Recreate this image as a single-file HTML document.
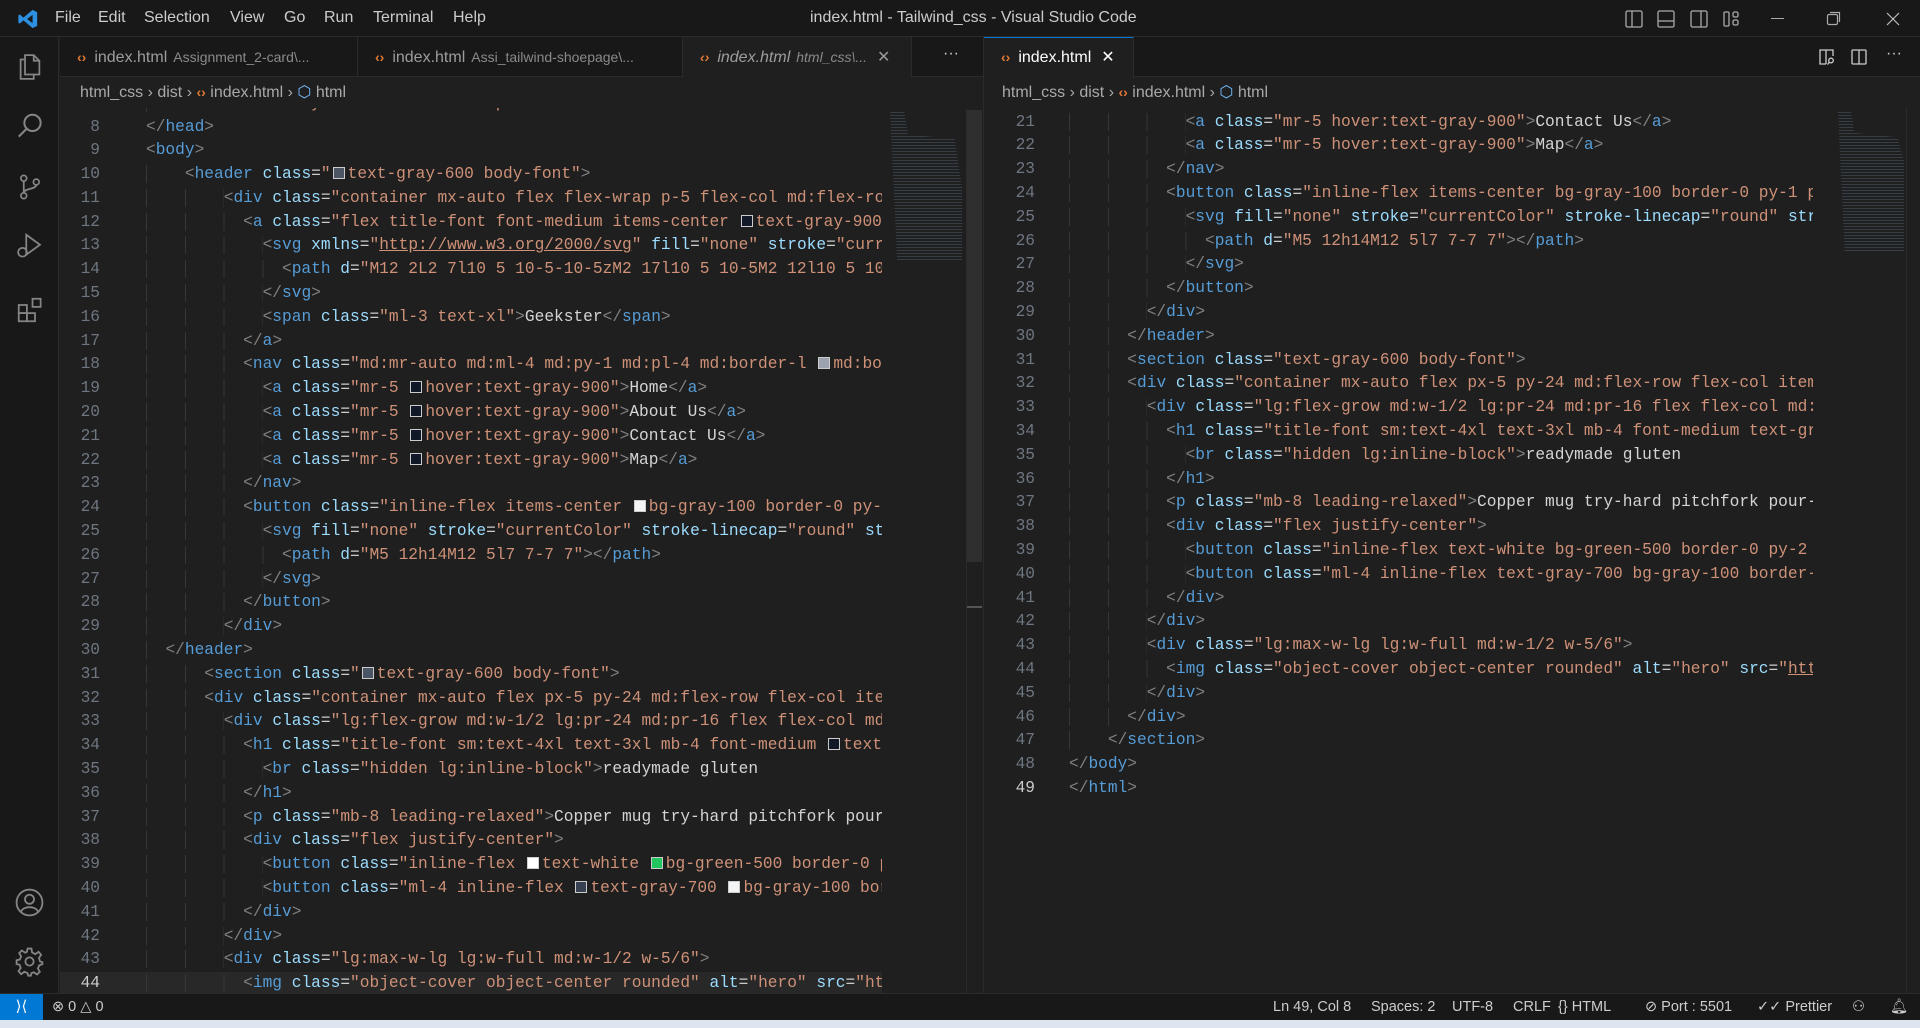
<!DOCTYPE html>
<html><head><meta charset="utf-8"><style>
*{margin:0;padding:0;box-sizing:border-box}
body{width:1920px;height:1028px;overflow:hidden;background:#1f1f1f;font-family:"Liberation Sans",sans-serif;color:#ccc;position:relative}
.abs{position:absolute}
#title{left:0;top:0;width:1920px;height:37px;background:#181818;border-bottom:1px solid #2b2b2b}
.menu{top:9px;font-size:16px;color:#cccccc}
#act{left:0;top:37px;width:59px;height:956px;background:#181818;border-right:1px solid #2b2b2b}
.tabbar{top:37px;height:40px;background:#181818;border-bottom:1px solid #2b2b2b}
.tab{top:0;height:40px;border-right:1px solid #2b2b2b;font-size:16px;line-height:40px;color:#9d9d9d;white-space:nowrap;overflow:hidden}
.tab .d{font-size:14px;color:#8a8a8a;margin-left:6px}
.ic{color:#e37933;font-weight:bold;margin:0 8px 0 17px;font-size:14px}
.bc{top:77px;height:31px;font-size:16px;line-height:31px;color:#a9a9a9;white-space:pre}
.ed{overflow:hidden;font-family:"Liberation Mono",monospace;font-size:16.2px}
.ln{height:23.8px;line-height:23.8px;white-space:pre;position:relative}
.num{position:absolute;text-align:right;color:#6e7681;width:40px}
.i{background:repeating-linear-gradient(to right,#363636 0 1px,transparent 1px 4ch)}
.t{color:#569cd6}.a{color:#9cdcfe}.s{color:#ce9178}.p{color:#808080}.x{color:#d4d4d4}
.b{display:inline-block;width:12px;height:12px;border:1px solid #ccc;margin:0 3px 0 2px;vertical-align:-1px}
#status{left:0;top:993px;width:1920px;height:27px;background:#181818;border-top:1px solid #2b2b2b;font-size:14.5px;line-height:26px;color:#cccccc}
.st{top:0}
.mm{background:repeating-linear-gradient(to bottom,rgba(110,140,170,.28) 0 1px,transparent 1px 3px)}
</style></head><body>

<div id="title" class="abs">
 <svg class="abs" style="left:17px;top:8px" width="22" height="22" viewBox="0 0 24 24"><path d="M17 2 L22 4.5 V19.5 L17 22 L7 13.5 L3 17 L1.5 16 V8 L3 7 L7 10.5 Z M17 7.5 L11 12 L17 16.5 Z" fill="#2d8fe0"/></svg>
 <span class="abs menu" style="left:55px">File</span>
 <span class="abs menu" style="left:98px">Edit</span>
 <span class="abs menu" style="left:144px">Selection</span>
 <span class="abs menu" style="left:230px">View</span>
 <span class="abs menu" style="left:284px">Go</span>
 <span class="abs menu" style="left:324px">Run</span>
 <span class="abs menu" style="left:373px">Terminal</span>
 <span class="abs menu" style="left:453px">Help</span>
 <span class="abs menu" style="left:810px;color:#cccccc">index.html - Tailwind_css - Visual Studio Code</span>
 <svg class="abs" style="left:1624px;top:9px" width="20" height="20" viewBox="0 0 20 20" fill="none" stroke="#aaa" stroke-width="1.3"><rect x="2" y="2" width="16" height="16" rx="1.5"/><line x1="8" y1="2" x2="8" y2="18"/></svg>
 <svg class="abs" style="left:1656px;top:9px" width="20" height="20" viewBox="0 0 20 20" fill="none" stroke="#aaa" stroke-width="1.3"><rect x="2" y="2" width="16" height="16" rx="1.5"/><line x1="2" y1="12" x2="18" y2="12"/></svg>
 <svg class="abs" style="left:1689px;top:9px" width="20" height="20" viewBox="0 0 20 20" fill="none" stroke="#aaa" stroke-width="1.3"><rect x="2" y="2" width="16" height="16" rx="1.5"/><line x1="12" y1="2" x2="12" y2="18"/></svg>
 <svg class="abs" style="left:1722px;top:9px" width="20" height="20" viewBox="0 0 20 20" fill="none" stroke="#aaa" stroke-width="1.3"><rect x="2" y="3" width="5" height="14" rx="1"/><rect x="11" y="3" width="5" height="5" rx="1.5"/><rect x="11" y="11" width="5" height="5" rx="1.5"/></svg>
 <div class="abs" style="left:1771px;top:18px;width:13px;height:1px;background:#aaa"></div>
 <svg class="abs" style="left:1826px;top:11px" width="15" height="15" viewBox="0 0 15 15" fill="none" stroke="#aaa" stroke-width="1.2"><rect x="1.5" y="3.5" width="10" height="10" rx="1.5"/><path d="M4 1.5 H13.5 V11"/></svg>
 <svg class="abs" style="left:1886px;top:12px" width="14" height="14" viewBox="0 0 14 14" stroke="#bbb" stroke-width="1.2"><line x1="1" y1="1" x2="13" y2="13"/><line x1="13" y1="1" x2="1" y2="13"/></svg>
</div>

<div id="act" class="abs">
 <svg class="abs" style="left:15px;top:15px" width="30" height="30" viewBox="0 0 24 24" fill="none" stroke="#858585" stroke-width="1.4"><path d="M8 6 H4.5 V21.5 H15 V18"/><path d="M8 2.5 H15 L19.5 7 V18 H8 Z"/><path d="M15 2.5 V7 H19.5"/></svg>
 <svg class="abs" style="left:15px;top:74px" width="30" height="30" viewBox="0 0 24 24" fill="none" stroke="#858585" stroke-width="1.6"><circle cx="14" cy="9.5" r="6.5"/><line x1="9.5" y1="14" x2="3" y2="20.5"/></svg>
 <svg class="abs" style="left:15px;top:135px" width="30" height="30" viewBox="0 0 24 24" fill="none" stroke="#858585" stroke-width="1.4"><circle cx="7" cy="5" r="2.3"/><circle cx="7" cy="19" r="2.3"/><circle cx="17" cy="8" r="2.3"/><path d="M7 7.3 V16.7 M17 10.3 C17 14 7 13 7 16.7"/></svg>
 <svg class="abs" style="left:15px;top:194px" width="30" height="30" viewBox="0 0 24 24" fill="none" stroke="#858585" stroke-width="1.4"><path d="M9 3 L20 11 L9 19 Z"/><circle cx="6" cy="17" r="3.5"/></svg>
 <svg class="abs" style="left:15px;top:258px" width="30" height="30" viewBox="0 0 24 24" fill="none" stroke="#858585" stroke-width="1.4"><rect x="3" y="8" width="6.5" height="6.5"/><rect x="3" y="14.5" width="6.5" height="6.5"/><rect x="9.5" y="14.5" width="6.5" height="6.5"/><rect x="14" y="3" width="6.5" height="6.5"/></svg>
 <svg class="abs" style="left:14px;top:850px" width="31" height="31" viewBox="0 0 24 24" fill="none" stroke="#858585" stroke-width="1.4"><circle cx="12" cy="12" r="10"/><circle cx="12" cy="9.5" r="3.5"/><path d="M5.5 19 C7 14.5 17 14.5 18.5 19"/></svg>
 <svg class="abs" style="left:14px;top:909px" width="31" height="31" viewBox="0 0 24 24" fill="none" stroke="#858585" stroke-width="1.4"><circle cx="12" cy="12" r="3.2"/><path d="M10.5 2 H13.5 L14 5 L16.5 6.3 L19 4.5 L21 6.8 L19.3 9.3 L20.2 12 L22 12.5 V14 L19.5 15 L18.5 17.5 L20 20 L17.8 22 L15.3 20.3 L13.5 21 L13 23 H11 L10.5 21 L8 20 L5.5 21.8 L3.5 19.5 L5.2 17 L4.3 14.5 L2 14 V11 L4.5 10.5 L5.5 8 L4 5.5 L6 3.5 L8.7 5.2 L10 4.5 Z"/></svg>
</div>

<!-- left tab bar -->
<div class="abs tabbar" style="left:60px;width:923px">
 <div class="abs tab" style="left:0;width:298px"><span class="ic">&lsaquo;&rsaquo;</span>index.html<span class="d">Assignment_2-card\...</span></div>
 <div class="abs tab" style="left:298px;width:325px"><span class="ic">&lsaquo;&rsaquo;</span>index.html<span class="d">Assi_tailwind-shoepage\...</span></div>
 <div class="abs tab" style="left:623px;width:229px;background:#1f1f1f;font-style:italic;height:41px"><span class="ic">&lsaquo;&rsaquo;</span>index.html<span class="d" style="font-style:italic">html_css\...</span><span style="font-style:normal;margin-left:10px;color:#999">✕</span></div>
 <span class="abs" style="left:883px;top:8px;color:#ccc;font-size:16px">···</span>
</div>
<div class="abs tabbar" style="left:983px;width:937px;border-left:1px solid #2b2b2b">
 <div class="abs tab" style="left:0;width:150px;background:#1f1f1f;color:#fff;border-top:1px solid #0078d4;height:41px;line-height:38px"><span class="ic">&lsaquo;&rsaquo;</span>index.html<span style="margin-left:10px">✕</span></div>
 <svg class="abs" style="left:834px;top:11px" width="18" height="18" viewBox="0 0 18 18" fill="none" stroke="#ccc" stroke-width="1.3"><path d="M8 16 H2 V2 H15 V8"/><line x1="8" y1="2" x2="8" y2="16"/><circle cx="13" cy="12.5" r="2.3"/><line x1="11.3" y1="14.3" x2="9.5" y2="16.5"/></svg>
 <svg class="abs" style="left:866px;top:11px" width="18" height="18" viewBox="0 0 18 18" fill="none" stroke="#ccc" stroke-width="1.3"><rect x="2" y="2" width="14" height="14" rx="1"/><line x1="9" y1="2" x2="9" y2="16"/></svg>
 <span class="abs" style="left:902px;top:8px;color:#ccc;font-size:16px">···</span>
</div>

<!-- breadcrumbs -->
<div class="abs bc" style="left:80px">html_css <span>›</span> dist <span>›</span> <span style="color:#e37933;font-weight:bold;font-size:14px">&lsaquo;&rsaquo;</span> index.html <span>›</span> <span style="color:#75beff">⬡</span> html</div>
<div class="abs bc" style="left:1002px">html_css <span>›</span> dist <span>›</span> <span style="color:#e37933;font-weight:bold;font-size:14px">&lsaquo;&rsaquo;</span> index.html <span>›</span> <span style="color:#75beff">⬡</span> html</div>

<!-- left editor -->
<div class="abs" style="left:983px;top:77px;width:1px;height:916px;background:#2b2b2b"></div>
<div class="abs ed" style="left:60px;top:108px;width:822px;height:885px">
 <div class="abs" style="left:0;top:-16.3px;width:822px">
  <div class="ln"><span class="num" style="left:0">7</span><span style="position:absolute;left:86px"><span class="i">    </span><span class="p">&lt;</span><span class="t">link</span> <span class="a">rel</span>=<span class="s">"stylesheet"</span> <span class="a">href</span>=<span class="s">"output.css"</span><span class="p">&gt;</span></span></div>
  <div class="ln"><span class="num" style="left:0">8</span><span style="position:absolute;left:86px"><span class="p">&lt;/</span><span class="t">head</span><span class="p">&gt;</span></span></div>
  <div class="ln"><span class="num" style="left:0">9</span><span style="position:absolute;left:86px"><span class="p">&lt;</span><span class="t">body</span><span class="p">&gt;</span></span></div>
  <div class="ln"><span class="num" style="left:0">10</span><span style="position:absolute;left:86px"><span class="i">    </span><span class="p">&lt;</span><span class="t">header</span> <span class="a">class</span>=<span class="s">"<span class="b" style="background:#4b5563"></span>text-gray-600 body-font"</span><span class="p">&gt;</span></span></div>
  <div class="ln"><span class="num" style="left:0">11</span><span style="position:absolute;left:86px"><span class="i">        </span><span class="p">&lt;</span><span class="t">div</span> <span class="a">class</span>=<span class="s">"container mx-auto flex flex-wrap p-5 flex-col md:flex-row items-center"</span><span class="p">&gt;</span></span></div>
  <div class="ln"><span class="num" style="left:0">12</span><span style="position:absolute;left:86px"><span class="i">          </span><span class="p">&lt;</span><span class="t">a</span> <span class="a">class</span>=<span class="s">"flex title-font font-medium items-center <span class="b" style="background:#111827"></span>text-gray-900 mb-4"</span></span></div>
  <div class="ln"><span class="num" style="left:0">13</span><span style="position:absolute;left:86px"><span class="i">            </span><span class="p">&lt;</span><span class="t">svg</span> <span class="a">xmlns</span>=<span class="s">"<u>http://www.w3.org/2000/svg</u>"</span> <span class="a">fill</span>=<span class="s">"none"</span> <span class="a">stroke</span>=<span class="s">"currentColor"</span></span></div>
  <div class="ln"><span class="num" style="left:0">14</span><span style="position:absolute;left:86px"><span class="i">              </span><span class="p">&lt;</span><span class="t">path</span> <span class="a">d</span>=<span class="s">"M12 2L2 7l10 5 10-5-10-5zM2 17l10 5 10-5M2 12l10 5 10-5"</span></span></div>
  <div class="ln"><span class="num" style="left:0">15</span><span style="position:absolute;left:86px"><span class="i">            </span><span class="p">&lt;/</span><span class="t">svg</span><span class="p">&gt;</span></span></div>
  <div class="ln"><span class="num" style="left:0">16</span><span style="position:absolute;left:86px"><span class="i">            </span><span class="p">&lt;</span><span class="t">span</span> <span class="a">class</span>=<span class="s">"ml-3 text-xl"</span><span class="p">&gt;</span><span class="x">Geekster</span><span class="p">&lt;/</span><span class="t">span</span><span class="p">&gt;</span></span></div>
  <div class="ln"><span class="num" style="left:0">17</span><span style="position:absolute;left:86px"><span class="i">          </span><span class="p">&lt;/</span><span class="t">a</span><span class="p">&gt;</span></span></div>
  <div class="ln"><span class="num" style="left:0">18</span><span style="position:absolute;left:86px"><span class="i">          </span><span class="p">&lt;</span><span class="t">nav</span> <span class="a">class</span>=<span class="s">"md:mr-auto md:ml-4 md:py-1 md:pl-4 md:border-l <span class="b" style="background:#9ca3af"></span>md:border-gray-400"</span></span></div>
  <div class="ln"><span class="num" style="left:0">19</span><span style="position:absolute;left:86px"><span class="i">            </span><span class="p">&lt;</span><span class="t">a</span> <span class="a">class</span>=<span class="s">"mr-5 <span class="b" style="background:#111827"></span>hover:text-gray-900"</span><span class="p">&gt;</span><span class="x">Home</span><span class="p">&lt;/</span><span class="t">a</span><span class="p">&gt;</span></span></div>
  <div class="ln"><span class="num" style="left:0">20</span><span style="position:absolute;left:86px"><span class="i">            </span><span class="p">&lt;</span><span class="t">a</span> <span class="a">class</span>=<span class="s">"mr-5 <span class="b" style="background:#111827"></span>hover:text-gray-900"</span><span class="p">&gt;</span><span class="x">About Us</span><span class="p">&lt;/</span><span class="t">a</span><span class="p">&gt;</span></span></div>
  <div class="ln"><span class="num" style="left:0">21</span><span style="position:absolute;left:86px"><span class="i">            </span><span class="p">&lt;</span><span class="t">a</span> <span class="a">class</span>=<span class="s">"mr-5 <span class="b" style="background:#111827"></span>hover:text-gray-900"</span><span class="p">&gt;</span><span class="x">Contact Us</span><span class="p">&lt;/</span><span class="t">a</span><span class="p">&gt;</span></span></div>
  <div class="ln"><span class="num" style="left:0">22</span><span style="position:absolute;left:86px"><span class="i">            </span><span class="p">&lt;</span><span class="t">a</span> <span class="a">class</span>=<span class="s">"mr-5 <span class="b" style="background:#111827"></span>hover:text-gray-900"</span><span class="p">&gt;</span><span class="x">Map</span><span class="p">&lt;/</span><span class="t">a</span><span class="p">&gt;</span></span></div>
  <div class="ln"><span class="num" style="left:0">23</span><span style="position:absolute;left:86px"><span class="i">          </span><span class="p">&lt;/</span><span class="t">nav</span><span class="p">&gt;</span></span></div>
  <div class="ln"><span class="num" style="left:0">24</span><span style="position:absolute;left:86px"><span class="i">          </span><span class="p">&lt;</span><span class="t">button</span> <span class="a">class</span>=<span class="s">"inline-flex items-center <span class="b" style="background:#f3f4f6"></span>bg-gray-100 border-0 py-1 px-3"</span></span></div>
  <div class="ln"><span class="num" style="left:0">25</span><span style="position:absolute;left:86px"><span class="i">            </span><span class="p">&lt;</span><span class="t">svg</span> <span class="a">fill</span>=<span class="s">"none"</span> <span class="a">stroke</span>=<span class="s">"currentColor"</span> <span class="a">stroke-linecap</span>=<span class="s">"round"</span> <span class="a">stroke-linejoin</span></span></div>
  <div class="ln"><span class="num" style="left:0">26</span><span style="position:absolute;left:86px"><span class="i">              </span><span class="p">&lt;</span><span class="t">path</span> <span class="a">d</span>=<span class="s">"M5 12h14M12 5l7 7-7 7"</span><span class="p">&gt;&lt;/</span><span class="t">path</span><span class="p">&gt;</span></span></div>
  <div class="ln"><span class="num" style="left:0">27</span><span style="position:absolute;left:86px"><span class="i">            </span><span class="p">&lt;/</span><span class="t">svg</span><span class="p">&gt;</span></span></div>
  <div class="ln"><span class="num" style="left:0">28</span><span style="position:absolute;left:86px"><span class="i">          </span><span class="p">&lt;/</span><span class="t">button</span><span class="p">&gt;</span></span></div>
  <div class="ln"><span class="num" style="left:0">29</span><span style="position:absolute;left:86px"><span class="i">        </span><span class="p">&lt;/</span><span class="t">div</span><span class="p">&gt;</span></span></div>
  <div class="ln"><span class="num" style="left:0">30</span><span style="position:absolute;left:86px"><span class="i">  </span><span class="p">&lt;/</span><span class="t">header</span><span class="p">&gt;</span></span></div>
  <div class="ln"><span class="num" style="left:0">31</span><span style="position:absolute;left:86px"><span class="i">      </span><span class="p">&lt;</span><span class="t">section</span> <span class="a">class</span>=<span class="s">"<span class="b" style="background:#4b5563"></span>text-gray-600 body-font"</span><span class="p">&gt;</span></span></div>
  <div class="ln"><span class="num" style="left:0">32</span><span style="position:absolute;left:86px"><span class="i">      </span><span class="p">&lt;</span><span class="t">div</span> <span class="a">class</span>=<span class="s">"container mx-auto flex px-5 py-24 md:flex-row flex-col items-center"</span></span></div>
  <div class="ln"><span class="num" style="left:0">33</span><span style="position:absolute;left:86px"><span class="i">        </span><span class="p">&lt;</span><span class="t">div</span> <span class="a">class</span>=<span class="s">"lg:flex-grow md:w-1/2 lg:pr-24 md:pr-16 flex flex-col md:items-start"</span></span></div>
  <div class="ln"><span class="num" style="left:0">34</span><span style="position:absolute;left:86px"><span class="i">          </span><span class="p">&lt;</span><span class="t">h1</span> <span class="a">class</span>=<span class="s">"title-font sm:text-4xl text-3xl mb-4 font-medium <span class="b" style="background:#111827"></span>text-gray-900"</span></span></div>
  <div class="ln"><span class="num" style="left:0">35</span><span style="position:absolute;left:86px"><span class="i">            </span><span class="p">&lt;</span><span class="t">br</span> <span class="a">class</span>=<span class="s">"hidden lg:inline-block"</span><span class="p">&gt;</span><span class="x">readymade gluten</span></span></div>
  <div class="ln"><span class="num" style="left:0">36</span><span style="position:absolute;left:86px"><span class="i">          </span><span class="p">&lt;/</span><span class="t">h1</span><span class="p">&gt;</span></span></div>
  <div class="ln"><span class="num" style="left:0">37</span><span style="position:absolute;left:86px"><span class="i">          </span><span class="p">&lt;</span><span class="t">p</span> <span class="a">class</span>=<span class="s">"mb-8 leading-relaxed"</span><span class="p">&gt;</span><span class="x">Copper mug try-hard pitchfork pour-over freegan</span></span></div>
  <div class="ln"><span class="num" style="left:0">38</span><span style="position:absolute;left:86px"><span class="i">          </span><span class="p">&lt;</span><span class="t">div</span> <span class="a">class</span>=<span class="s">"flex justify-center"</span><span class="p">&gt;</span></span></div>
  <div class="ln"><span class="num" style="left:0">39</span><span style="position:absolute;left:86px"><span class="i">            </span><span class="p">&lt;</span><span class="t">button</span> <span class="a">class</span>=<span class="s">"inline-flex <span class="b" style="background:#ffffff"></span>text-white <span class="b" style="background:#22c55e"></span>bg-green-500 border-0 py-2 px-6"</span></span></div>
  <div class="ln"><span class="num" style="left:0">40</span><span style="position:absolute;left:86px"><span class="i">            </span><span class="p">&lt;</span><span class="t">button</span> <span class="a">class</span>=<span class="s">"ml-4 inline-flex <span class="b" style="background:#374151"></span>text-gray-700 <span class="b" style="background:#f3f4f6"></span>bg-gray-100 border-0"</span></span></div>
  <div class="ln"><span class="num" style="left:0">41</span><span style="position:absolute;left:86px"><span class="i">          </span><span class="p">&lt;/</span><span class="t">div</span><span class="p">&gt;</span></span></div>
  <div class="ln"><span class="num" style="left:0">42</span><span style="position:absolute;left:86px"><span class="i">        </span><span class="p">&lt;/</span><span class="t">div</span><span class="p">&gt;</span></span></div>
  <div class="ln"><span class="num" style="left:0">43</span><span style="position:absolute;left:86px"><span class="i">        </span><span class="p">&lt;</span><span class="t">div</span> <span class="a">class</span>=<span class="s">"lg:max-w-lg lg:w-full md:w-1/2 w-5/6"</span><span class="p">&gt;</span></span></div>
  <div class="ln" style="background:#282828"><span class="num" style="left:0;color:#cccccc">44</span><span style="position:absolute;left:86px"><span class="i">          </span><span class="p">&lt;</span><span class="t">img</span> <span class="a">class</span>=<span class="s">"object-cover object-center rounded"</span> <span class="a">alt</span>=<span class="s">"hero"</span> <span class="a">src</span>=<span class="s">"https://dummyimage.com/720x600"</span></span></div>
 </div>
</div>
<!-- left minimap & scrollbar -->
<div class="abs mm" style="left:890px;top:112px;width:72px;height:150px;clip-path:polygon(0 0,20% 0,25% 15%,90% 18%,95% 35%,100% 50%,100% 100%,10% 100%)"></div>
<div class="abs" style="left:966px;top:108px;width:16px;height:885px;background:#1f1f1f;border-left:1px solid #2b2b2b"></div>
<div class="abs" style="left:967px;top:110px;width:15px;height:452px;background:#2f2f2f"></div>
<div class="abs" style="left:967px;top:606px;width:15px;height:2px;background:#555"></div>

<!-- right editor -->
<div class="abs ed" style="left:984px;top:108px;width:829px;height:885px">
 <div class="abs" style="left:0;top:2.6px;width:829px">
  <div class="ln"><span class="num" style="left:11px">21</span><span style="position:absolute;left:85px"><span class="i">            </span><span class="p">&lt;</span><span class="t">a</span> <span class="a">class</span>=<span class="s">"mr-5 hover:text-gray-900"</span><span class="p">&gt;</span><span class="x">Contact Us</span><span class="p">&lt;/</span><span class="t">a</span><span class="p">&gt;</span></span></div>
  <div class="ln"><span class="num" style="left:11px">22</span><span style="position:absolute;left:85px"><span class="i">            </span><span class="p">&lt;</span><span class="t">a</span> <span class="a">class</span>=<span class="s">"mr-5 hover:text-gray-900"</span><span class="p">&gt;</span><span class="x">Map</span><span class="p">&lt;/</span><span class="t">a</span><span class="p">&gt;</span></span></div>
  <div class="ln"><span class="num" style="left:11px">23</span><span style="position:absolute;left:85px"><span class="i">          </span><span class="p">&lt;/</span><span class="t">nav</span><span class="p">&gt;</span></span></div>
  <div class="ln"><span class="num" style="left:11px">24</span><span style="position:absolute;left:85px"><span class="i">          </span><span class="p">&lt;</span><span class="t">button</span> <span class="a">class</span>=<span class="s">"inline-flex items-center bg-gray-100 border-0 py-1 px-3 focus:outline-none"</span></span></div>
  <div class="ln"><span class="num" style="left:11px">25</span><span style="position:absolute;left:85px"><span class="i">            </span><span class="p">&lt;</span><span class="t">svg</span> <span class="a">fill</span>=<span class="s">"none"</span> <span class="a">stroke</span>=<span class="s">"currentColor"</span> <span class="a">stroke-linecap</span>=<span class="s">"round"</span> <span class="a">stroke-linejoin</span></span></div>
  <div class="ln"><span class="num" style="left:11px">26</span><span style="position:absolute;left:85px"><span class="i">              </span><span class="p">&lt;</span><span class="t">path</span> <span class="a">d</span>=<span class="s">"M5 12h14M12 5l7 7-7 7"</span><span class="p">&gt;&lt;/</span><span class="t">path</span><span class="p">&gt;</span></span></div>
  <div class="ln"><span class="num" style="left:11px">27</span><span style="position:absolute;left:85px"><span class="i">            </span><span class="p">&lt;/</span><span class="t">svg</span><span class="p">&gt;</span></span></div>
  <div class="ln"><span class="num" style="left:11px">28</span><span style="position:absolute;left:85px"><span class="i">          </span><span class="p">&lt;/</span><span class="t">button</span><span class="p">&gt;</span></span></div>
  <div class="ln"><span class="num" style="left:11px">29</span><span style="position:absolute;left:85px"><span class="i">        </span><span class="p">&lt;/</span><span class="t">div</span><span class="p">&gt;</span></span></div>
  <div class="ln"><span class="num" style="left:11px">30</span><span style="position:absolute;left:85px"><span class="i">      </span><span class="p">&lt;/</span><span class="t">header</span><span class="p">&gt;</span></span></div>
  <div class="ln"><span class="num" style="left:11px">31</span><span style="position:absolute;left:85px"><span class="i">      </span><span class="p">&lt;</span><span class="t">section</span> <span class="a">class</span>=<span class="s">"text-gray-600 body-font"</span><span class="p">&gt;</span></span></div>
  <div class="ln"><span class="num" style="left:11px">32</span><span style="position:absolute;left:85px"><span class="i">      </span><span class="p">&lt;</span><span class="t">div</span> <span class="a">class</span>=<span class="s">"container mx-auto flex px-5 py-24 md:flex-row flex-col items-center"</span></span></div>
  <div class="ln"><span class="num" style="left:11px">33</span><span style="position:absolute;left:85px"><span class="i">        </span><span class="p">&lt;</span><span class="t">div</span> <span class="a">class</span>=<span class="s">"lg:flex-grow md:w-1/2 lg:pr-24 md:pr-16 flex flex-col md:items-start"</span></span></div>
  <div class="ln"><span class="num" style="left:11px">34</span><span style="position:absolute;left:85px"><span class="i">          </span><span class="p">&lt;</span><span class="t">h1</span> <span class="a">class</span>=<span class="s">"title-font sm:text-4xl text-3xl mb-4 font-medium text-gray-900"</span></span></div>
  <div class="ln"><span class="num" style="left:11px">35</span><span style="position:absolute;left:85px"><span class="i">            </span><span class="p">&lt;</span><span class="t">br</span> <span class="a">class</span>=<span class="s">"hidden lg:inline-block"</span><span class="p">&gt;</span><span class="x">readymade gluten</span></span></div>
  <div class="ln"><span class="num" style="left:11px">36</span><span style="position:absolute;left:85px"><span class="i">          </span><span class="p">&lt;/</span><span class="t">h1</span><span class="p">&gt;</span></span></div>
  <div class="ln"><span class="num" style="left:11px">37</span><span style="position:absolute;left:85px"><span class="i">          </span><span class="p">&lt;</span><span class="t">p</span> <span class="a">class</span>=<span class="s">"mb-8 leading-relaxed"</span><span class="p">&gt;</span><span class="x">Copper mug try-hard pitchfork pour-over freegan</span></span></div>
  <div class="ln"><span class="num" style="left:11px">38</span><span style="position:absolute;left:85px"><span class="i">          </span><span class="p">&lt;</span><span class="t">div</span> <span class="a">class</span>=<span class="s">"flex justify-center"</span><span class="p">&gt;</span></span></div>
  <div class="ln"><span class="num" style="left:11px">39</span><span style="position:absolute;left:85px"><span class="i">            </span><span class="p">&lt;</span><span class="t">button</span> <span class="a">class</span>=<span class="s">"inline-flex text-white bg-green-500 border-0 py-2 px-6 focus"</span></span></div>
  <div class="ln"><span class="num" style="left:11px">40</span><span style="position:absolute;left:85px"><span class="i">            </span><span class="p">&lt;</span><span class="t">button</span> <span class="a">class</span>=<span class="s">"ml-4 inline-flex text-gray-700 bg-gray-100 border-0 py-2"</span></span></div>
  <div class="ln"><span class="num" style="left:11px">41</span><span style="position:absolute;left:85px"><span class="i">          </span><span class="p">&lt;/</span><span class="t">div</span><span class="p">&gt;</span></span></div>
  <div class="ln"><span class="num" style="left:11px">42</span><span style="position:absolute;left:85px"><span class="i">        </span><span class="p">&lt;/</span><span class="t">div</span><span class="p">&gt;</span></span></div>
  <div class="ln"><span class="num" style="left:11px">43</span><span style="position:absolute;left:85px"><span class="i">        </span><span class="p">&lt;</span><span class="t">div</span> <span class="a">class</span>=<span class="s">"lg:max-w-lg lg:w-full md:w-1/2 w-5/6"</span><span class="p">&gt;</span></span></div>
  <div class="ln"><span class="num" style="left:11px">44</span><span style="position:absolute;left:85px"><span class="i">          </span><span class="p">&lt;</span><span class="t">img</span> <span class="a">class</span>=<span class="s">"object-cover object-center rounded"</span> <span class="a">alt</span>=<span class="s">"hero"</span> <span class="a">src</span>=<span class="s">"<u>https://dummy</u>"</span></span></div>
  <div class="ln"><span class="num" style="left:11px">45</span><span style="position:absolute;left:85px"><span class="i">        </span><span class="p">&lt;/</span><span class="t">div</span><span class="p">&gt;</span></span></div>
  <div class="ln"><span class="num" style="left:11px">46</span><span style="position:absolute;left:85px"><span class="i">      </span><span class="p">&lt;/</span><span class="t">div</span><span class="p">&gt;</span></span></div>
  <div class="ln"><span class="num" style="left:11px">47</span><span style="position:absolute;left:85px"><span class="i">    </span><span class="p">&lt;/</span><span class="t">section</span><span class="p">&gt;</span></span></div>
  <div class="ln"><span class="num" style="left:11px">48</span><span style="position:absolute;left:85px"><span class="p">&lt;/</span><span class="t">body</span><span class="p">&gt;</span></span></div>
  <div class="ln"><span class="num" style="left:11px;color:#cccccc">49</span><span style="position:absolute;left:85px"><span class="p">&lt;/</span><span class="t">html</span><span class="p">&gt;</span></span></div>
 </div>
</div>
<div class="abs mm" style="left:1838px;top:112px;width:66px;height:140px;clip-path:polygon(0 0,20% 0,25% 15%,90% 18%,100% 35%,100% 100%,10% 100%)"></div>
<div class="abs" style="left:1906px;top:108px;width:1px;height:885px;background:#2b2b2b"></div>

<!-- status bar -->
<div id="status" class="abs">
 <div class="abs" style="left:0;top:0;width:43px;height:26px;background:#0078d4;color:#fff;text-align:center;font-size:15px">⟩⟨</div>
 <span class="abs st" style="left:52px">⊗ 0 △ 0</span>
 <span class="abs st" style="left:1273px">Ln 49, Col 8</span>
 <span class="abs st" style="left:1371px">Spaces: 2</span>
 <span class="abs st" style="left:1452px">UTF-8</span>
 <span class="abs st" style="left:1513px">CRLF</span>
 <span class="abs st" style="left:1558px">{} HTML</span>
 <span class="abs st" style="left:1645px">⊘ Port : 5501</span>
 <span class="abs st" style="left:1757px">✓✓ Prettier</span>
 <span class="abs st" style="left:1852px">⚇</span>
 <span class="abs st" style="left:1890px">🔔︎</span>
</div>
<div class="abs" style="left:0;top:1020px;width:1920px;height:8px;background:#dde6f0"></div>
</body></html>
